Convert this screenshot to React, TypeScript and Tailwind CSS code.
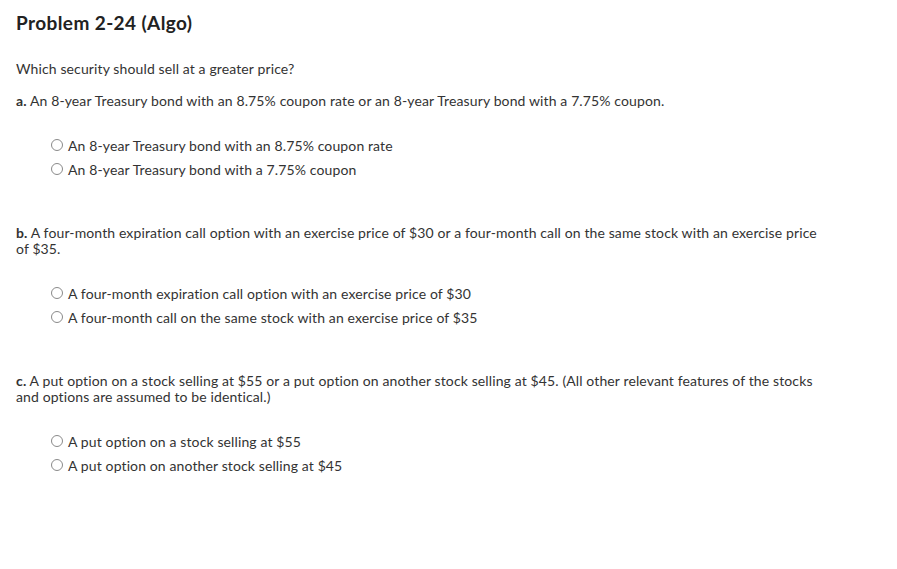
const font = { fontFamily: "Lato, 'Open Sans', sans-serif" };

function Radio({ label }: { label: string }) {
  return (
    <label className="flex items-center h-6 text-[14px] tracking-[0.12px] text-[#333]">
      <span className="w-[12px] h-[12px] rounded-full border border-[#8a8a8a] bg-white mr-[5px] shrink-0" />
      <span>{label}</span>
    </label>
  );
}

function Part({ letter, text, options }: { letter: string; text: string; options: string[] }) {
  return (
    <div>
      <p className="text-[14px] tracking-[0.12px] leading-[16px] text-[#333] max-w-[808px]">
        <b className="font-bold">{letter}.</b> {text}
      </p>
      <div className="pl-[35px] mt-[24px] mb-[44px]">
        {options.map((o) => (
          <Radio key={o} label={o} />
        ))}
      </div>
    </div>
  );
}

export default function App() {
  return (
    <div className="w-[897px] h-[569px] bg-white px-4 pt-[12px]" style={font}>
      <h1 className="text-[19px] font-bold text-[#222] leading-[22px] tracking-[0.4px]">Problem 2-24 (Algo)</h1>
      <p className="text-[14px] tracking-[0.12px] text-[#333] mt-[27px] leading-[16px]">Which security should sell at a greater price?</p>
      <div className="mt-[16px]">
        <Part
          letter="a"
          text="An 8-year Treasury bond with an 8.75% coupon rate or an 8-year Treasury bond with a 7.75% coupon."
          options={["An 8-year Treasury bond with an 8.75% coupon rate", "An 8-year Treasury bond with a 7.75% coupon"]}
        />
        <Part
          letter="b"
          text="A four-month expiration call option with an exercise price of $30 or a four-month call on the same stock with an exercise price of $35."
          options={["A four-month expiration call option with an exercise price of $30", "A four-month call on the same stock with an exercise price of $35"]}
        />
        <Part
          letter="c"
          text="A put option on a stock selling at $55 or a put option on another stock selling at $45. (All other relevant features of the stocks and options are assumed to be identical.)"
          options={["A put option on a stock selling at $55", "A put option on another stock selling at $45"]}
        />
      </div>
    </div>
  );
}
